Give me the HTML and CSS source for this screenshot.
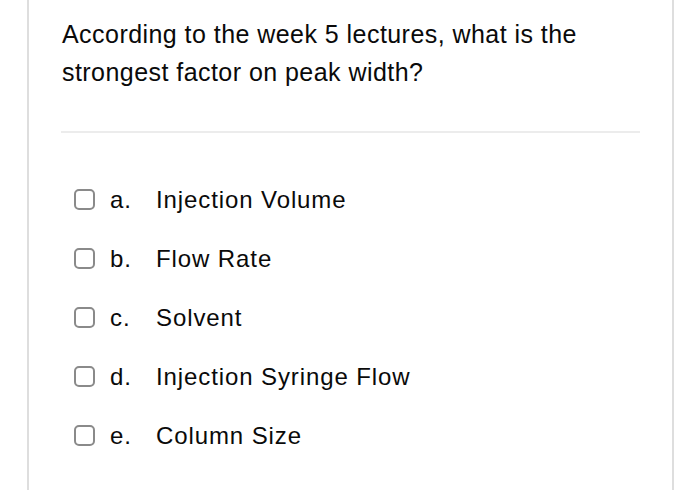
FILE: index.html
```html
<!DOCTYPE html>
<html>
<head>
<meta charset="utf-8">
<link rel="stylesheet" href="styles.css">
</head>
<body>
<div class="card">
  <p class="question">According to the week 5 lectures, what is the strongest factor on peak width?</p>
  <hr class="sep">
  <ul class="options">
    <li class="option"><span class="box"></span><span class="letter">a.</span><span class="label">Injection Volume</span></li>
    <li class="option"><span class="box"></span><span class="letter">b.</span><span class="label">Flow Rate</span></li>
    <li class="option"><span class="box"></span><span class="letter">c.</span><span class="label">Solvent</span></li>
    <li class="option"><span class="box"></span><span class="letter">d.</span><span class="label">Injection Syringe Flow</span></li>
    <li class="option"><span class="box"></span><span class="letter">e.</span><span class="label">Column Size</span></li>
  </ul>
</div>
</body>
</html>
```

FILE: styles.css
```css
html, body {
  margin: 0;
  padding: 0;
  background: #ffffff;
  height: 490px;
  overflow: hidden;
}
body {
  font-family: "Liberation Sans", Arial, sans-serif;
  color: #0a0a0a;
}
.card {
  margin-left: 27px;
  width: 647px;
  height: 490px;
  box-sizing: border-box;
  border-left: 2px solid #dedede;
  border-right: 2px solid #dedede;
  padding: 15px 31px 0 33px;
}
.question {
  margin: 0;
  font-size: 25px;
  letter-spacing: 0.45px;
  line-height: 38px;
  width: 570px;
}
.sep {
  border: 0;
  height: 2px;
  background: #ececec;
  margin: 40px 0 0 -1px;
  width: 579px;
}
.options {
  list-style: none;
  margin: 0;
  padding: 37px 0 0 12px;
}
.option {
  display: flex;
  align-items: center;
  height: 59px;
  font-size: 24px;
  letter-spacing: 0.9px;
}
.box {
  width: 17px;
  height: 17px;
  border: 2px solid #8a8a8a;
  border-radius: 5px;
  flex: none;
}
.letter {
  margin-left: 15px;
  width: 46px;
  padding-top: 1px;
}
.label {
  padding-top: 1px;
}
```
